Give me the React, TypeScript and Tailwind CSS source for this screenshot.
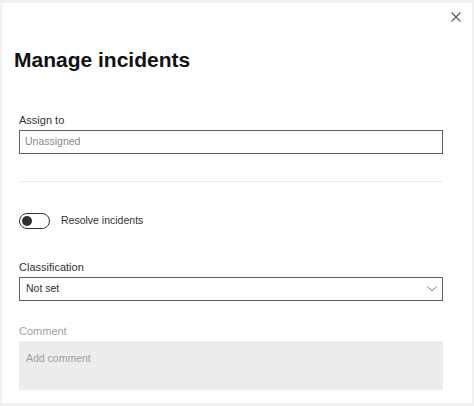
import React from "react";

export default function App() {
  const font = { fontFamily: '"Liberation Sans", Arial, sans-serif' };
  return (
    <div className="w-[474px] h-[406px] bg-[#f1f1f1] pt-[3px] px-[2px] pb-[3px]" style={font}>
      <div className="w-full h-full bg-white flex flex-col">
        <div className="flex justify-end pr-[11px] pt-[9px]">
          <button className="w-[10px] h-[10px] flex items-center justify-center" aria-label="Close">
            <svg width="10" height="10" viewBox="0 0 10 10" fill="none">
              <path d="M0.5 0.5 L9.5 9.5 M9.5 0.5 L0.5 9.5" stroke="#555" strokeWidth="1.1" />
            </svg>
          </button>
        </div>
        <h1 className="mt-[24px] ml-[12px] text-[21px] leading-[28px] font-bold text-[#111111]">
          Manage incidents
        </h1>
        <div className="pl-[17px] pr-[29px] flex flex-col">
          <label className="mt-[38px] text-[11px] leading-[16px] text-[#323130]">Assign to</label>
          <div className="mt-[2px] h-[24px] border border-[#605e5c] flex items-center px-[5px]">
            <span className="text-[10.5px] text-[#8a8886]">Unassigned</span>
          </div>
          <div className="mt-[27px] h-px bg-[#edebe9]" />
          <div className="mt-[31px] flex items-center h-[16px]">
            <div className="w-[31px] h-[16px] rounded-full border border-[#323130] flex items-center pl-[2px]">
              <div className="w-[10px] h-[10px] rounded-full bg-[#323130]" />
            </div>
            <span className="ml-[11px] text-[10.5px] text-[#323130]">Resolve incidents</span>
          </div>
          <label className="mt-[30px] text-[11px] leading-[16px] text-[#323130]">Classification</label>
          <div className="mt-[2px] h-[24px] border border-[#605e5c] flex items-center justify-between pl-[6px] pr-[5px]">
            <span className="text-[10.5px] text-[#323130]">Not set</span>
            <svg width="10" height="6" viewBox="0 0 10 6" fill="none">
              <path d="M0.5 0.5 L5 5 L9.5 0.5" stroke="#8a8886" strokeWidth="1" />
            </svg>
          </div>
          <label className="mt-[22px] text-[11px] leading-[16px] text-[#a19f9d]">Comment</label>
          <div className="mt-[2px] h-[49px] bg-[#ededed] px-[7px] pt-[4px]">
            <span className="text-[10.5px] text-[#a19f9d]">Add comment</span>
          </div>
        </div>
      </div>
    </div>
  );
}
